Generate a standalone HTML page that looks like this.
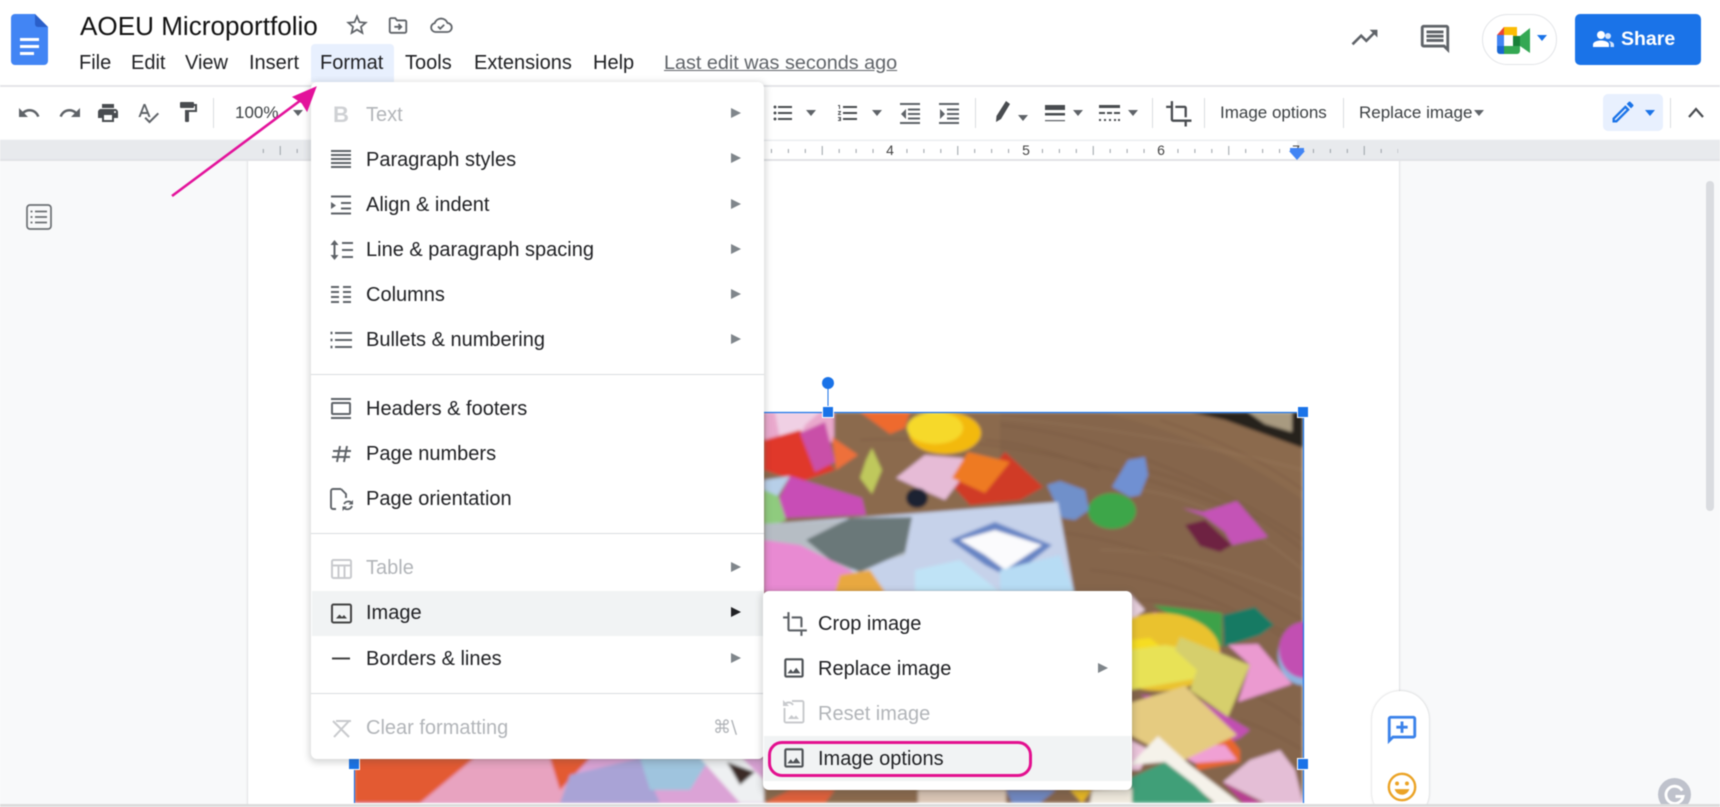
<!DOCTYPE html>
<html lang="en"><head><meta charset="utf-8"><title>AOEU Microportfolio</title>
<style>
html,body{margin:0;padding:0;background:#fff}
#w{position:relative;width:1720px;height:807px;overflow:hidden;background:#f8f9fa;font-family:"Liberation Sans",Arial,sans-serif;color:#202124;filter:blur(.5px)}
#w div,#w span.t,#w svg.ab{position:absolute}
.t{white-space:nowrap;line-height:24px}
.m{font-size:20px;top:51px}
.tb{font-size:17px;top:101px;color:#3c4043}
.r{font-size:14px;top:141px;line-height:18px;color:#444;width:20px;text-align:center}
.v{width:1px;background:#dadce0;top:98px;height:30px}
.c{width:0;height:0;border-left:5px solid transparent;border-right:5px solid transparent;border-top:6px solid #5f6368;top:110px}
.mn{background:#fff;border-radius:6px;box-shadow:0 2px 7px 2px rgba(60,64,67,.2)}
.l{font-size:20px;left:55px;color:#202124;margin-top:1px}
.g{color:#b2b5b9}
.a{width:0;height:0;border-left:10px solid #80868b;border-top:5.5px solid transparent;border-bottom:5.5px solid transparent;left:420px}
.s{left:0;right:0;height:1px;background:#dadce0}
.hd{width:10px;height:10px;background:#1a73e8;border:1px solid #fff}
svg{display:block}
</style></head><body><div id="w">

<!-- page -->
<div style="left:248px;top:160px;width:1151px;height:647px;background:#fff;box-shadow:0 0 2px rgba(60,64,67,.3)"></div>

<!-- outline icon -->
<svg class="ab" style="left:24px;top:202px" width="30" height="30" viewBox="0 0 30 30" fill="none" stroke="#6b6f73" stroke-width="1.7"><rect x="3" y="3" width="24" height="24" rx="3"/><path d="M11 9.5h12M11 15h12M11 20.5h12"/><path d="M6.5 9.5h2M6.5 15h2M6.5 20.5h2"/></svg>

<!-- scrollbar -->
<div style="left:1706px;top:181px;width:8px;height:330px;border-radius:4px;background:#dadce0"></div>

<!-- collage image -->
<svg class="ab" style="left:0;top:0" width="1720" height="807" viewBox="0 0 1720 807">
<defs><filter id="b" x="-5%" y="-5%" width="110%" height="110%"><feGaussianBlur stdDeviation="1.5"/></filter>
<clipPath id="cp"><rect x="354" y="412" width="949" height="391"/></clipPath></defs>
<g clip-path="url(#cp)"><g filter="url(#b)">
<rect x="354" y="412" width="949" height="391" fill="#8b6a4e"/>
<path d="M1100 412Q1220 440 1303 500V803H1000V412Z" fill="#85654b"/>
<g stroke="#6f4d34" stroke-width="2" fill="none" opacity=".28">
<path d="M860 440Q1040 430 1260 520"/><path d="M1000 425Q1150 440 1303 540"/><path d="M1040 530Q1160 540 1303 620"/><path d="M1090 570Q1200 580 1303 650"/><path d="M1145 470Q1230 490 1303 550"/><path d="M1160 420Q1250 450 1303 490"/><path d="M1240 720Q1270 730 1303 750"/><path d="M1240 690Q1270 700 1303 725"/><path d="M1130 600Q1220 600 1303 640"/><path d="M985 440Q1040 445 1100 470"/>
</g>
<g stroke="#a98a6c" stroke-width="1.5" fill="none" opacity=".3"><path d="M1000 418Q1150 430 1303 470"/><path d="M1100 550Q1200 550 1303 600"/><path d="M1140 490Q1220 500 1303 570"/></g>
<path d="M1190 412H1303V448L1225 420Z" fill="#26241f"/><path d="M1248 412H1292V432L1265 424Z" fill="#a89a80"/>

<!-- upper-left cluster -->
<rect x="764" y="412" width="70" height="30" fill="#e9a8cc"/>
<path d="M775 412H820L805 425 795 445 780 440Z" fill="#f0d0e4"/>
<path d="M860 412H910L905 428 890 434Z" fill="#ee6a2d"/>
<path d="M764 440 800 430 835 470 800 482 764 470Z" fill="#e0372b"/>
<path d="M800 433 825 422 835 462 815 472Z" fill="#c94fa8"/>
<path d="M832 437 858 455 836 470Z" fill="#ee6f3a"/>
<path d="M872 448 882 470 872 494 860 478 866 460Z" fill="#bfc85c"/>
<ellipse cx="945" cy="433" rx="36" ry="21" fill="#f3b90a"/><ellipse cx="935" cy="428" rx="28" ry="16" fill="#f6d92c"/>
<path d="M949 482 970 505 1020 500 1043 487 1005 452 990 470Z" fill="#d03b28"/>
<path d="M896 478 925 455 963 458 968 470 945 500 922 490Z" fill="#e6bbd6"/>
<path d="M952 478 968 452 1010 462 985 493Z" fill="#ee7a22"/>
<ellipse cx="917" cy="498" rx="11" ry="10" fill="#1d2431"/>
<path d="M790 476 862 498 866 515 780 518 776 505Z" fill="#c84eb6"/>
<path d="M764 490 778 495 786 520 764 530Z" fill="#8fcb7e"/>
<path d="M764 480 790 476 778 496 764 490Z" fill="#b7cfe8"/>

<!-- blue, green -->
<path d="M1047 485 1060 481 1085 490 1089 510 1075 520 1062 518Z" fill="#7090ca"/>
<path d="M1112 487 1128 460 1145 457 1148 475 1140 495 1130 497Z" fill="#6f90d2"/>
<ellipse cx="1112" cy="511" rx="24" ry="18" fill="#3da64a"/>
<path d="M1185 525 1205 520 1232 545 1220 552 1200 546Z" fill="#6e2342"/>
<path d="M1182 508 1203 512 1237 501 1268 537 1232 545 1225 532 1204 516Z" fill="#c452b6"/>

<!-- card -->
<path d="M764 524 905 514 1058 502 1074 592H764Z" fill="#c6d2ea"/>
<path d="M764 524 912 517 905 555 850 570 764 540Z" fill="#b6bdc4"/>
<path d="M806 540 850 518 912 517 905 552 860 572 830 560Z" fill="#6a7879"/>
<path d="M950 540 995 522 1052 545 1010 578 985 565Z" fill="#6684c4"/>
<path d="M960 540 995 530 1042 545 1005 570 985 555Z" fill="#fbfbfd"/>
<path d="M764 540 800 545 850 570 880 592H764Z" fill="#e88ad2"/>
<path d="M840 575 870 570 885 592H835Z" fill="#e8a840"/>
<path d="M915 570 960 560 1000 592H915Z" fill="#bfe3f6"/>
<path d="M1000 570 1060 555 1074 592H1000Z" fill="#b7dcf4"/>

<!-- lower-right cluster -->
<path d="M1128 592 1145 610 1128 622Z" fill="#e8d0de"/>
<path d="M1128 625 1155 612 1222 652 1128 662Z" fill="#c750b0"/>
<path d="M1153 605 1222 613 1222 647 1180 620Z" fill="#3da24a"/>
<path d="M1223 615 1255 607 1274 625 1260 635 1224 647Z" fill="#127a64"/>
<ellipse cx="1160" cy="652" rx="60" ry="39" fill="#eac22e"/>
<path d="M1130 640 1150 638 1165 650 1150 662 1130 660Z" fill="#f6dd24"/>
<path d="M1228 645 1258 644 1292 684 1238 702 1250 665Z" fill="#eb9ad0"/>
<ellipse cx="1303" cy="655" rx="25" ry="30" fill="#8db4e0"/>
<ellipse cx="1304" cy="650" rx="25" ry="28" fill="#c24fb2"/>
<path d="M1130 650 1165 645 1195 650 1200 678 1130 690Z" fill="#e8e256"/>
<path d="M1180 637 1250 665 1228 717 1190 690 1197 670 1175 650Z" fill="#d6cf6c"/>
<path d="M1140 695 1200 700 1250 730 1240 738 1210 750 1150 700Z" fill="#c24fb2"/>
<path d="M1210 710 1240 750 1240 762 1198 770 1195 762Z" fill="#e9662f"/>
<path d="M1225 745 1237 760 1195 763 1160 745Z" fill="#f0a0d4"/>
<path d="M1130 703 1185 686 1237 735 1180 762 1130 735Z" fill="#e5cb80"/>
<path d="M1130 740 1150 750 1140 770 1130 770Z" fill="#ecc5dc"/>
<path d="M1130 765 1158 736 1190 765 1240 803H1215L1165 762Z" fill="#f5f2ea"/>
<path d="M1130 778 1165 762 1195 785 1213 803H1130Z" fill="#3f9f78"/>
<path d="M1223 782 1250 760 1280 750 1295 770 1303 803H1265Z" fill="#e4bed6"/>
<path d="M1223 782 1262 803H1243Z" fill="#b83e92"/>

<!-- bottom strips -->
<rect x="354" y="758" width="410" height="46" fill="#dba3d6"/>
<path d="M354 758H474L445 785 420 803H354Z" fill="#e35a30"/>
<path d="M474 758H560L570 803H420Z" fill="#e8a3c0"/>
<path d="M550 758H590L560 790Z" fill="#e35a30"/>
<path d="M570 775 640 758 660 803H560Z" fill="#a9a3d6"/>
<path d="M640 758H710L690 790 650 790Z" fill="#9fc4de"/>
<path d="M700 758H742L764 780V803H740Z" fill="#eef0f2"/>
<path d="M727 762 755 772 740 785Z" fill="#3a2a25"/>
<path d="M764 803 790 790H835L825 803Z" fill="#e0603a"/>
<path d="M918 790H1006V803H918Z" fill="#d9c4b4"/>
<path d="M1006 790H1056L1040 803H1012Z" fill="#7087c0"/>
<path d="M1070 790H1092L1082 803Z" fill="#e8b820"/>
<path d="M1092 790 1132 788V803H1090Z" fill="#eee8dc"/>
</g></g>
<path d="M354.500 412.500H1303.500V803M354.500 412V803" fill="none" stroke="#1a73e8" stroke-width="1.2"/>
<rect x="827.500" y="384" width="1" height="24" fill="#1a73e8"/>
<circle cx="828" cy="383" r="6" fill="#1a73e8"/>
</svg>
<div class="hd" style="left:822px;top:406px"></div>
<div class="hd" style="left:1297px;top:406px"></div>
<div class="hd" style="left:1297px;top:758px"></div>
<div class="hd" style="left:348px;top:758px"></div>

<!-- side pill -->
<div style="left:1372px;top:691px;width:57px;height:130px;background:#fff;border-radius:29px;box-shadow:0 0 2px rgba(60,64,67,.3)"></div>
<svg class="ab" style="left:1385px;top:713px" width="34" height="34" viewBox="0 0 24 24" fill="#3b82ea"><path d="M20 2H4c-1.100 0-2 .9-2 2v18l4-4h14c1.100 0 2-.9 2-2V4c0-1.100-.9-2-2-2zm0 14H5.170L4 17.170V4h16v12zM11 14h2v-3h3V9h-3V6h-2v3H8v2h3z"/></svg>
<svg class="ab" style="left:1385px;top:770px" width="34" height="34" viewBox="0 0 24 24"><circle cx="12" cy="12" r="9.300" fill="none" stroke="#eba326" stroke-width="1.700"/><circle cx="8.500" cy="9.500" r="1.400" fill="#eba326"/><circle cx="15.500" cy="9.500" r="1.400" fill="#eba326"/><path d="M6.800 13.500h10.400c-.8 2.500-2.800 4-5.200 4s-4.400-1.500-5.200-4z" fill="#eba326"/></svg>
<div style="left:1658px;top:778px;width:33px;height:33px;border-radius:50%;background:#bfc2cc"></div>
<svg class="ab" style="left:1663px;top:783px" width="23" height="23" viewBox="0 0 24 24" fill="none" stroke="#fff" stroke-width="3"><path d="M20 8A9 9 0 1 0 21 14H13"/></svg>
<div style="left:0;top:804px;width:1720px;height:3px;background:#dcdcdc"></div>

<!-- header -->
<div style="left:0;top:0;width:1720px;height:85px;background:#fff"></div>
<svg class="ab" style="left:11px;top:14px" width="38" height="52" viewBox="0 0 38 52"><path d="M4 0H24L37 13V47a4 4 0 0 1-4 4H4a4 4 0 0 1-4-4V4a4 4 0 0 1 4-4z" fill="#4285f4"/><path d="M24 0 37 13H27a3 3 0 0 1-3-3z" fill="#2a5fc9"/><path d="M9 24H28V27H9zM9 31H28V34H9zM9 38H23V41H9z" fill="#fff"/></svg>
<span class="t" style="left:80px;top:13px;font-size:26.100px;line-height:26px;color:#111">AOEU Microportfolio</span>
<svg class="ab" style="left:344px;top:12px" width="26" height="26" viewBox="0 0 24 24" fill="#5f6368"><path d="M22 9.240l-7.190-.62L12 2 9.190 8.630 2 9.240l5.460 4.730L5.820 21 12 17.270 18.180 21l-1.630-7.030L22 9.240zM12 15.400l-3.760 2.270 1-4.280-3.320-2.880 4.380-.38L12 6.100l1.710 4.040 4.380.38-3.320 2.880 1 4.280L12 15.400z"/></svg>
<svg class="ab" style="left:387px;top:14px" width="22" height="22" viewBox="0 0 24 24" fill="none" stroke="#5f6368" stroke-width="2"><path d="M3 5.500V19a1.500 1.500 0 0 0 1.500 1.500h15A1.500 1.500 0 0 0 21 19V8.500A1.500 1.500 0 0 0 19.500 7H11L9 4.500H4.500A1.500 1.500 0 0 0 3 5.500z"/><path d="M8 14h7M12.500 11l3 3-3 3"/></svg>
<svg class="ab" style="left:429px;top:13px" width="24" height="24" viewBox="0 0 24 24" fill="none" stroke="#5f6368" stroke-width="1.800"><path d="M6.500 19A4.500 4.500 0 0 1 5.700 10.100 6.800 6.800 0 0 1 18.500 10 4.500 4.500 0 0 1 18 19z"/><path d="M9 13.500l2.200 2.200 4-4"/></svg>

<span class="t m" style="left:79px">File</span>
<span class="t m" style="left:131px">Edit</span>
<span class="t m" style="left:185px">View</span>
<span class="t m" style="left:249px">Insert</span>
<div style="left:311px;top:44px;width:83px;height:38px;background:#e8f0fe;border-radius:4px 4px 0 0"></div>
<span class="t m" style="left:320px">Format</span>
<span class="t m" style="left:405px">Tools</span>
<span class="t m" style="left:474px">Extensions</span>
<span class="t m" style="left:593px">Help</span>
<span class="t m" style="left:664px;font-size:19.800px;color:#5f6368;text-decoration:underline">Last edit was seconds ago</span>

<svg class="ab" style="left:1349px;top:22px" width="31" height="31" viewBox="0 0 24 24" fill="#5f6368"><path d="M16 6l2.290 2.290-4.880 4.880-4-4L2 16.590 3.410 18l6-6 4 4 6.300-6.290L22 12V6z"/></svg>
<svg class="ab" style="left:1418px;top:22px" width="34" height="34" viewBox="0 0 24 24" fill="#5f6368"><path d="M21.990 4c0-1.100-.89-2-1.990-2H4c-1.100 0-2 .9-2 2v12c0 1.100.9 2 2 2h14l4 4-.01-18zM20 4v13.170L18.830 16H4V4h16zM6 12h12v2H6zm0-3h12v2H6zm0-3h12v2H6z"/></svg>
<div style="left:1482px;top:14px;width:75px;height:51px;border-radius:26px;background:#fff;border:1px solid #e2e4e7;box-sizing:border-box"></div>
<svg class="ab" style="left:1497px;top:27px" width="34" height="27" viewBox="0 0 34 27">
<path d="M7 0H20V9H0Z" fill="#fbbc04"/><path d="M7 0V8H0Z" fill="#ea4335"/><path d="M0 8H7V19H0Z" fill="#4285f4"/><path d="M0 19H7V27H3a3 3 0 0 1-3-3Z" fill="#1967d2"/>
<path d="M7 19H23V24a3 3 0 0 1-3 3H7Z" fill="#34a853"/><path d="M15 9H23V19H15Z" fill="#188038"/>
<path d="M23 9 33 1V26L23 19Z" fill="#34a853"/><path d="M17 13.500 23 9V19Z" fill="#188038"/><rect x="7" y="8" width="9" height="11" fill="#fff"/></svg>
<div class="c" style="left:1537px;top:35px;border-top-color:#1a73e8"></div>
<div style="left:1575px;top:14px;width:126px;height:51px;border-radius:5px;background:#1a73e8"></div>
<svg class="ab" style="left:1591px;top:27px" width="24" height="24" viewBox="0 0 24 24" fill="#fff"><circle cx="10" cy="8" r="4"/><path d="M2 20v-2.500C2 14.800 6.500 13.500 10 13.500s8 1.300 8 4V20z"/><circle cx="17" cy="9" r="3" fill="#d2e3fc"/><path d="M19.500 20v-2.500c0-1.500-.8-2.600-2-3.400 2.500.3 5.500 1.400 5.500 3.400V20z" fill="#d2e3fc"/></svg>
<span class="t" style="left:1621px;top:27px;font-size:19.500px;font-weight:bold;color:#fff">Share</span>

<!-- toolbar -->
<div style="left:0;top:85px;width:1720px;height:54px;background:#fff;border-top:2px solid #e4e5e8;box-sizing:border-box"></div>
<svg class="ab" style="left:0;top:0" width="1720" height="160" viewBox="0 0 1720 160" fill="#5f6368">
<g transform="translate(17 101) scale(1)"><path d="M12.500 8c-2.650 0-5.050.99-6.900 2.600L2 7v9h9l-3.620-3.620c1.390-1.160 3.160-1.880 5.120-1.880 3.540 0 6.550 2.310 7.600 5.500l2.370-.78C21.080 11.030 17.150 8 12.500 8z"/></g>
<g transform="translate(58 101) scale(1)"><path d="M18.400 10.600C16.550 8.990 14.150 8 11.500 8c-4.650 0-8.580 3.030-9.960 7.220L3.900 16c1.050-3.190 4.050-5.500 7.600-5.500 1.950 0 3.730.72 5.120 1.880L13 16h9V7l-3.600 3.600z"/></g>
<g transform="translate(96 101) scale(1)" fill="#494c50"><path d="M19 8H5c-1.660 0-3 1.340-3 3v6h4v4h12v-4h4v-6c0-1.660-1.340-3-3-3zm-3 11H8v-5h8v5zm3-7c-.55 0-1-.45-1-1s.45-1 1-1 1 .45 1 1-.45 1-1 1zm-1-9H6v4h12V3z"/></g>
<g transform="translate(136 101) scale(1)"><path d="M12.450 16h2.090L9.430 3H7.570L2.460 16h2.090l1.120-3h5.640l1.140 3zm-6.020-5L8.500 5.480 10.570 11H6.430zm15.160.59l-8.090 8.090L9.830 16l-1.410 1.410 5.090 5.090L23 13l-1.410-1.410z"/></g>
<g transform="translate(176 100) scale(1)" fill="#494c50"><path d="M18 4V3c0-.55-.45-1-1-1H5c-.55 0-1 .45-1 1v4c0 .55.45 1 1 1h12c.55 0 1-.45 1-1V6h1v4H9v11c0 .55.45 1 1 1h2c.55 0 1-.45 1-1v-9h8V4h-3z"/></g>
<g transform="translate(771 101) scale(1)" fill="#494c50"><path d="M4 10.500c-.83 0-1.500.67-1.500 1.500s.67 1.500 1.500 1.500 1.500-.67 1.500-1.500-.67-1.500-1.500-1.500zm0-6c-.83 0-1.500.67-1.500 1.500S3.170 7.500 4 7.500 5.500 6.830 5.500 6 4.830 4.500 4 4.500zm0 12c-.83 0-1.500.68-1.500 1.500s.68 1.500 1.500 1.500 1.500-.68 1.500-1.500-.67-1.500-1.500-1.500zM7 19h14v-2H7v2zm0-6h14v-2H7v2zm0-8v2h14V5H7z"/></g>
<g transform="translate(836 101) scale(1)" fill="#494c50"><path d="M2 17h2v.5H3v1h1v.5H2v1h3v-4H2v1zm1-9h1V4H2v1h1v3zm-1 3h1.800L2 13.100v.9h3v-1H3.200L5 10.900V10H2v1zm5-6v2h14V5H7zm0 14h14v-2H7v2zm0-6h14v-2H7v2z"/></g>
<path d="M900 103h20v2h-20zM908 108.500h12v2h-12zM908 113h12v2h-12zM908 117.500h12v2h-12zM900 122h20v2h-20zM906 109v10l-5-5z"/>
<path d="M939 103h20v2h-20zM947 108.500h12v2h-12zM947 113h12v2h-12zM947 117.500h12v2h-12zM939 122h20v2h-20zM940 109v10l5-5z"/>
<path d="M1006 101l4 3-9 15-5 3 .5-6z" fill="#494c50"/>
<path d="M1045 105h20v5h-20z" fill="#494c50"/><path d="M1045 113h20v2.500h-20z" fill="#494c50"/><path d="M1045 120h20v1.200h-20z"/>
<path d="M1099 105h21v3h-21zM1099 112h6v2h-6zM1107 112h5v2h-5zM1114 112h6v2h-6zM1099 119h2v2h-2zM1104 119h2v2h-2zM1109 119h2v2h-2zM1114 119h2v2h-2zM1118 119h2v2h-2z" fill="#494c50"/>
<g transform="translate(1165 100) scale(1.150)" fill="#494c50"><path d="M17 15h2V7c0-1.100-.9-2-2-2H9v2h8v8zM7 17V1H5v4H1v2h4v10c0 1.100.9 2 2 2h10v4h2v-4h4v-2H7z"/></g>
<path d="M1689 117l7-8 7 8" fill="none" stroke="#494c50" stroke-width="2.200"/>
</svg>
<div class="v" style="left:213px"></div><div class="v" style="left:975px"></div><div class="v" style="left:1152px"></div><div class="v" style="left:1204px"></div><div class="v" style="left:1343px"></div><div class="v" style="left:1670px"></div>
<span class="t tb" style="left:235px">100%</span>
<span class="t tb" style="left:1220px">Image options</span>
<span class="t tb" style="left:1359px">Replace image</span>
<div class="c" style="left:293px"></div>
<div class="c" style="left:806px"></div>
<div class="c" style="left:872px"></div>
<div class="c" style="left:1018px;top:115px"></div>
<div class="c" style="left:1073px"></div>
<div class="c" style="left:1128px"></div>
<div class="c" style="left:1474px"></div>
<div style="left:1603px;top:94px;width:60px;height:37px;border-radius:5px;background:#e8f0fe"></div>
<svg class="ab" style="left:1609px;top:98px" width="28" height="28" viewBox="0 0 24 24" fill="#1a73e8"><path d="M14.060 9.020l.92.92L5.920 19H5v-.92l9.060-9.060M17.660 3c-.25 0-.51.1-.7.29l-1.830 1.830 3.750 3.750 1.830-1.830c.39-.39.39-1.020 0-1.410l-2.340-2.340c-.2-.2-.45-.29-.71-.29zm-3.600 3.190L3 17.250V21h3.750L17.810 9.940l-3.750-3.750z"/></svg>
<div class="c" style="left:1645px;border-top-color:#1a73e8"></div>

<!-- ruler -->
<div style="left:0;top:140px;width:1720px;height:21px;background:#e8eaed;border-bottom:2px solid #e2e3e6;box-sizing:border-box"></div>
<div style="left:384px;top:141px;width:913px;height:18px;background:#fff"></div>
<svg class="ab" style="left:0;top:139px" width="1720" height="22" viewBox="0 0 1720 22"><defs><pattern id="tk" patternUnits="userSpaceOnUse" x="890" y="0" width="135.500" height="22"><path d="M16.940 10v4M33.880 10v4M50.810 10v4M84.690 10v4M101.630 10v4M118.560 10v4" stroke="#9aa0a6" stroke-width="1"/><path d="M67.750 7v9" stroke="#9aa0a6" stroke-width="1"/></pattern></defs><rect x="255" y="0" width="1143" height="22" fill="url(#tk)"/></svg>
<span class="t r" style="left:880px">4</span>
<span class="t r" style="left:1016px">5</span>
<span class="t r" style="left:1151px">6</span>
<span class="t r" style="left:1286px">7</span>
<svg class="ab" style="left:1288px;top:147px" width="18" height="13" viewBox="0 0 18 13"><rect x="2" y="1" width="14" height="3" fill="#4285f4"/><path d="M1 4H17L9 13z" fill="#4285f4"/></svg>

<!-- main menu -->
<div class="mn" style="left:311px;top:82px;width:453px;height:677px">
<span class="t g" style="left:22px;top:21px;font-size:22px;font-weight:bold;color:#cfd1d4">B</span>
<span class="t l g" style="top:20px">Text</span><div class="a" style="top:26px"></div>
<span class="t l" style="top:65px">Paragraph styles</span><div class="a" style="top:71px"></div>
<span class="t l" style="top:110px">Align &amp; indent</span><div class="a" style="top:117px"></div>
<span class="t l" style="top:155px">Line &amp; paragraph spacing</span><div class="a" style="top:162px"></div>
<span class="t l" style="top:200px">Columns</span><div class="a" style="top:207px"></div>
<span class="t l" style="top:245px">Bullets &amp; numbering</span><div class="a" style="top:252px"></div>
<div class="s" style="top:292px"></div>
<span class="t l" style="top:314px">Headers &amp; footers</span>
<span class="t l" style="top:359px">Page numbers</span>
<span class="t l" style="top:404px">Page orientation</span>
<div class="s" style="top:451px"></div>
<span class="t l g" style="top:473px">Table</span><div class="a" style="top:480px"></div>
<div style="left:1px;right:1px;top:509px;height:45px;background:#f1f3f4"></div>
<span class="t l" style="top:518px">Image</span><div class="a" style="top:525px;border-left-color:#202124"></div>
<span class="t l" style="top:564px">Borders &amp; lines</span><div class="a" style="top:571px"></div>
<div class="s" style="top:611px"></div>
<span class="t l g" style="top:633px">Clear formatting</span>
<span class="t g" style="left:402px;top:634px;font-size:18px;font-family:'DejaVu Sans',sans-serif">⌘\</span>

<svg class="ab" style="left:0;top:0" width="60" height="677" viewBox="0 0 60 677" fill="none" stroke="#5f6368" stroke-width="2">
<path d="M20 69h20M20 73h20M20 77h20M20 81h20M20 85h20"/>
<path d="M20 114.500h20M30 121h10M30 126.500h10M20 131.500h20" />
<path d="M20 120l5 3.500-5 3.500z" fill="#5f6368" stroke="none"/>
<path d="M23.500 161v14" stroke-width="2"/><path d="M19.500 163l4-5 4 5zM19.500 173l4 5 4-5z" fill="#5f6368" stroke="none"/>
<path d="M31 161h11M31 168h11M31 175h11"/>
<path d="M20 205h8M32 205h8M20 210h8M32 210h8M20 215h8M32 215h8M20 220h8M32 220h8"/>
<path d="M24 251h17M24 258h17M24 265h17"/><path d="M19.500 251h2M19.500 258h2M19.500 265h2" stroke-width="2.400"/>
<path d="M20 317h20M20 336h20"/><rect x="21" y="321" width="18" height="11" rx="1"/>
<path d="M22 369h18M21 375h18M29 364l-3 16M36 364l-3 16" stroke-width="2"/>
<path d="M30 407h-8a2 2 0 0 0-2 2v16a2 2 0 0 0 2 2h3M30 407l5 5v4" stroke-width="1.900"/>
<path d="M33 422a5 5 0 0 1 8-1M41 424a5 5 0 0 1-8 2" stroke-width="1.800"/><path d="M42 418l0 4.500-4.500 0zM31.500 429v-4.500h4.500z" fill="#5f6368" stroke="none"/>
<g stroke="#c8cacd"><rect x="21" y="478" width="19" height="18" rx="1.500"/><path d="M21 483.500h19M27.500 483.500V496M33.500 483.500V496"/></g>
<rect x="21" y="522.500" width="19" height="18" rx="1.500" stroke="#444" stroke-width="2"/><path d="M25 536.500l3.500-4 2.500 2.500 2-2 3 3.500z" fill="#444" stroke="none"/>
<path d="M21 576.500h18" stroke="#444"/>
<g stroke="#c8cacd" stroke-width="2"><path d="M25 639h15M22 639l16 16M38 639l-15 16"/></g>
</svg>
</div>

<!-- sub menu -->
<div class="mn" style="left:763px;top:591px;width:369px;height:199px">
<span class="t l" style="top:20px">Crop image</span>
<span class="t l" style="top:65px">Replace image</span><div class="a" style="top:72px;left:335px"></div>
<span class="t l g" style="top:110px">Reset image</span>
<div style="left:1px;right:1px;top:145px;height:45px;background:#f1f3f4"></div>
<span class="t l" style="top:155px">Image options</span>
<svg class="ab" style="left:0;top:0" width="60" height="199" viewBox="0 0 60 199">
<g transform="translate(19 20) scale(1.080)" fill="#5f6368"><path d="M17 15h2V7c0-1.100-.9-2-2-2H9v2h8v8zM7 17V1H5v4H1v2h4v10c0 1.100.9 2 2 2h10v4h2v-4h4v-2H7z"/></g>
<g transform="translate(18 64) scale(1.080)" fill="#4f5357"><path d="M19 5v14H5V5h14m0-2H5c-1.100 0-2 .9-2 2v14c0 1.100.9 2 2 2h14c1.100 0 2-.9 2-2V5c0-1.100-.9-2-2-2zm-4.860 8.860l-3 3.870L9 13.140 6 17h12l-3.860-5.140z"/></g>
<g fill="none" stroke="#c8cacd" stroke-width="1.900"><path d="M29 110h10a1.500 1.500 0 0 1 1.500 1.500V130a1.500 1.500 0 0 1-1.500 1.500H23a1.500 1.500 0 0 1-1.500-1.500V117"/><path d="M22 113a5 5 0 0 1 8 1"/></g><path d="M20 109v6h6zM25 128l3.500-4 2.500 2.500 2-2 3 3.500z" fill="#c8cacd"/>
<g transform="translate(18 154) scale(1.080)" fill="#4f5357"><path d="M19 5v14H5V5h14m0-2H5c-1.100 0-2 .9-2 2v14c0 1.100.9 2 2 2h14c1.100 0 2-.9 2-2V5c0-1.100-.9-2-2-2zm-4.860 8.860l-3 3.870L9 13.140 6 17h12l-3.860-5.140z"/></g>
</svg>
<div style="left:5px;top:149.500px;width:264px;height:36px;border:3px solid #e3108f;border-radius:14px;box-sizing:border-box"></div>
</div>

<!-- annotation arrow -->
<svg class="ab" style="left:0;top:0" width="500" height="220" viewBox="0 0 500 220"><path d="M172 196 301 100" stroke="#e3129b" stroke-width="2.600" fill="none"/><path d="M316 87 307 111 302 103 293 97Z" fill="#e3129b" stroke="#e3129b" stroke-width="1"/></svg>

</div></body></html>
